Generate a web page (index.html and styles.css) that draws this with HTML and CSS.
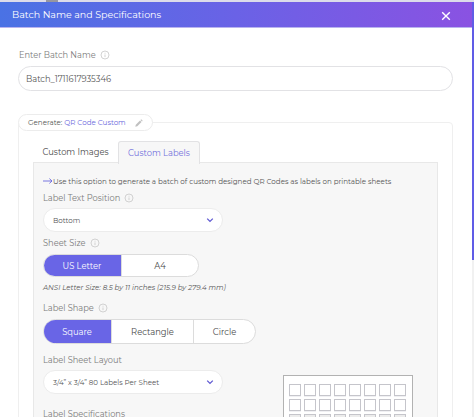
FILE: index.html
```
<!DOCTYPE html>
<html lang="en">
<head>
    <meta charset="UTF-8">
    <meta name="viewport" content="width=device-width, initial-scale=1.0">
    <title>Batch Name and Specifications</title>
    <link rel="stylesheet" href="styles.css">
</head>
<body>
    <svg width="0" height="0" class="defs">
        <symbol id="info" viewBox="0 0 10 10">
            <circle cx="5" cy="5" r="4" />
            <path d="M5 4.5v2.6M5 2.8v.8" />
        </symbol>
        <symbol id="chevron" viewBox="0 0 8 8">
            <path d="M1.2 2.6L4 5.4l2.8-2.8" />
        </symbol>
    </svg>

    <div class="backdrop"><div class="backdrop-shadow"></div></div>
    <div class="modal">
        <div class="modal-header">
            <h1>Batch Name and Specifications</h1>
            <svg class="close" viewBox="0 0 10 10"><path d="M1.2 1.2l7.6 7.6M8.8 1.2L1.2 8.8" /></svg>
        </div>
        <div class="modal-body">
            <div class="label name-label"><span>Enter Batch Name</span> <svg class="info"><use href="#info" /></svg></div>
            <div class="name-input"><span>Batch_1711617935346</span></div>

            <div class="generate">
                <div class="generate-pill">
                    <span>Generate: <b>QR Code Custom</b></span>
                    <svg class="pencil" viewBox="0 0 8 8"><path d="M.3 7.7l.5-2L5 1.500l1.500 1.500L2.300 7.200zM5.500 1l.7-.7L7.700 1.800l-.7.7z" /></svg>
                </div>
                <div class="tabs">
                    <div class="tab"><span>Custom Images</span></div>
                    <div class="tab tab-active"><span>Custom Labels</span></div>
                </div>
                <div class="panel">
                    <div class="hint">
                        <svg class="arrow" viewBox="0 0 10 8"><path d="M0 4h9M6.400 1.600L9 4 6.400 6.400" /></svg>
                        <span>Use this option to generate a batch of custom designed QR Codes as labels on printable sheets</span>
                    </div>
                    <div class="label"><span>Label Text Position</span> <svg class="info"><use href="#info" /></svg></div>
                    <div class="select"><span>Bottom</span><svg class="chevron"><use href="#chevron" /></svg></div>

                    <div class="label size-label"><span>Sheet Size</span> <svg class="info"><use href="#info" /></svg></div>
                    <div class="group group-size">
                        <div class="option option-active"><span>US Letter</span></div>
                        <div class="option"><span>A4</span></div>
                    </div>
                    <div class="note"><span>ANSI Letter Size: 8.5 by 11 inches (215.9 by 279.4 mm)</span></div>

                    <div class="label shape-label"><span>Label Shape</span> <svg class="info"><use href="#info" /></svg></div>
                    <div class="group group-shape">
                        <div class="option option-active"><span>Square</span></div>
                        <div class="option"><span>Rectangle</span></div>
                        <div class="option"><span>Circle</span></div>
                    </div>

                    <div class="layout-row">
                        <div>
                            <div class="label"><span>Label Sheet Layout</span></div>
                            <div class="select"><span>3/4” x 3/4” 80 Labels Per Sheet</span><svg class="chevron"><use href="#chevron" /></svg></div>
                            <div class="label specs-label"><span>Label Specifications</span></div>
                        </div>
                        <div class="sheet">
                            <i></i><i></i><i></i><i></i><i></i><i></i><i></i><i></i>
                            <i></i><i></i><i></i><i></i><i></i><i></i><i></i><i></i>
                            <i></i><i></i><i></i><i></i><i></i><i></i><i></i><i></i>
                        </div>
                    </div>
                </div>
            </div>
        </div>
        <div class="scrollbar"></div>
    </div>
</body>
</html>
```
FILE: styles.css
```
* {
    box-sizing: border-box;
}
body {
    margin: 0;
    height: 417px;
    overflow: hidden;
    background: #fff;
    color: #555;
    font-family: Montserrat, Inter, sans-serif;
    font-size: 8px;
}
span {
    white-space: nowrap;
}
svg {
    flex: none;
    fill: none;
}
.defs {
    display: none;
}
.backdrop {
    height: 2px;
    background: #dcdcea;
    padding-left: 46px;
}
.backdrop-shadow {
    width: 12px;
    height: 2px;
    background: #96969f;
}
.modal {
    position: relative;
    height: 415px;
    overflow: hidden;
}
.modal-header {
    display: flex;
    align-items: center;
    justify-content: space-between;
    width: 472px;
    height: 26px;
    padding: 0 21px 0 12px;
    border-bottom: 1px solid #b9b4ee;
    background: linear-gradient(90deg, #4a72e4, #6a62e6 50%, #8a52e2);
    color: #fff;
}
h1 {
    margin: 0;
    font-size: 9.5px;
    font-weight: 400;
}
.close {
    width: 10px;
    height: 10px;
    margin-top: 3px;
    stroke: #fff;
    stroke-width: 1.4;
}
.modal-body {
    padding: 17px 21px 0 18px;
    width: 474px;
}
.label {
    display: flex;
    align-items: center;
    gap: 4px;
    height: 16px;
    font-size: 8.25px;
    color: #7c7c7c;
}
.info {
    width: 10px;
    height: 10px;
    stroke: #c8c8c8;
    stroke-width: 0.8;
}
.name-label {
    height: 20px;
    margin-bottom: 1px;
    padding-left: 1px;
}
.name-input {
    display: flex;
    align-items: center;
    height: 25px;
    padding-left: 7px;
    border: 1px solid #e2e2e5;
    border-radius: 13px;
    font-size: 8.3px;
}
.generate {
    height: 320px;
    margin-top: 31px;
    border: 1px solid #efefef;
    border-radius: 4px;
    padding: 0 14px;
}
.generate-pill {
    display: flex;
    align-items: center;
    justify-content: space-between;
    width: 135px;
    height: 17px;
    margin: -9px 0 0 -15px;
    padding: 0 9px;
    border: 1px solid #ececec;
    border-radius: 9px;
    background: #fff;
    font-size: 7.15px;
}
.generate-pill b {
    font-weight: 400;
    color: #6c69dd;
}
.pencil {
    width: 8px;
    height: 8px;
    fill: #c0c0c0;
}
.tabs {
    display: flex;
    height: 22px;
    margin-top: 10px;
}
.tab {
    display: flex;
    align-items: center;
    justify-content: center;
    width: 85px;
    height: 22px;
    font-size: 8.35px;
    color: #4a4a4a;
}
.tab-active {
    width: 82px;
    height: 23px;
    border: 1px solid #e2e2e4;
    border-bottom: 0;
    border-radius: 3px 3px 0 0;
    background: #f7f7f7;
    color: #7370dc;
    z-index: 1;
}
.panel {
    height: 270px;
    margin-top: -1px;
    padding: 9px 9px 0;
    border: 1px solid #e8e8e8;
    background: #f7f7f7;
}
.hint {
    display: flex;
    align-items: center;
    height: 18px;
    font-size: 7.15px;
}
.arrow {
    width: 10px;
    height: 8px;
    stroke: #6a67dc;
    stroke-width: 0.9;
}
.select {
    display: flex;
    align-items: center;
    justify-content: space-between;
    width: 180px;
    height: 24px;
    margin-top: 2px;
    padding: 0 8px 0 9px;
    border: 1px solid #ececec;
    border-radius: 12px;
    background: #fff;
    font-size: 7.1px;
}
.chevron {
    width: 8px;
    height: 8px;
    stroke: #5f59d2;
    stroke-width: 1.3;
}
.size-label {
    margin-top: 3px;
}
.group {
    display: flex;
    margin-top: 3px;
    border: 1px solid #dcdcdc;
    border-radius: 13px;
    background: #fff;
    overflow: hidden;
    font-size: 8.4px;
    color: #484848;
}
.option {
    display: flex;
    flex: 1;
    align-items: center;
    justify-content: center;
}
.option + .option {
    border-left: 1px solid #dcdcdc;
}
.option-active {
    margin: -1px 0 -1px -1px;
    background: #6965e6;
    color: #fff;
}
.group-size {
    width: 156px;
    height: 23px;
}
.group-size .option-active {
    flex: 0 0 78px;
}
.note {
    display: flex;
    align-items: center;
    height: 16px;
    margin-top: 2px;
    font-size: 7.1px;
    font-style: italic;
}
.shape-label {
    margin-top: 5px;
}
.group-shape {
    width: 213px;
    height: 25px;
}
.group-shape .option-active {
    flex: 0 0 68px;
}
.group-shape .option:nth-child(2) {
    flex: 0 0 82px;
}
.layout-row {
    display: flex;
    justify-content: space-between;
    height: 80px;
    margin-top: 8px;
}
.specs-label {
    margin-top: 12px;
}
.sheet {
    display: grid;
    grid-template-columns: repeat(8, 12.4px);
    grid-auto-rows: 12px;
    gap: 3px 2.7px;
    width: 130px;
    height: 120px;
    margin: 23px 15px 0 0;
    padding: 8px 4.5px;
    border: 1px solid #b2b2b2;
    background: #fff;
}
.sheet i {
    border: 1px solid #c5c5cb;
    background: #fff;
    box-shadow: 0 1px 0 #f0f0f3;
}
.sheet i:nth-child(n+17) {
    background: #ececec;
}
.scrollbar {
    position: absolute;
    top: 0;
    right: 0;
    width: 2px;
    height: 415px;
    background: linear-gradient(#605ce6 258px, #f1f1f1 258px);
}
```
